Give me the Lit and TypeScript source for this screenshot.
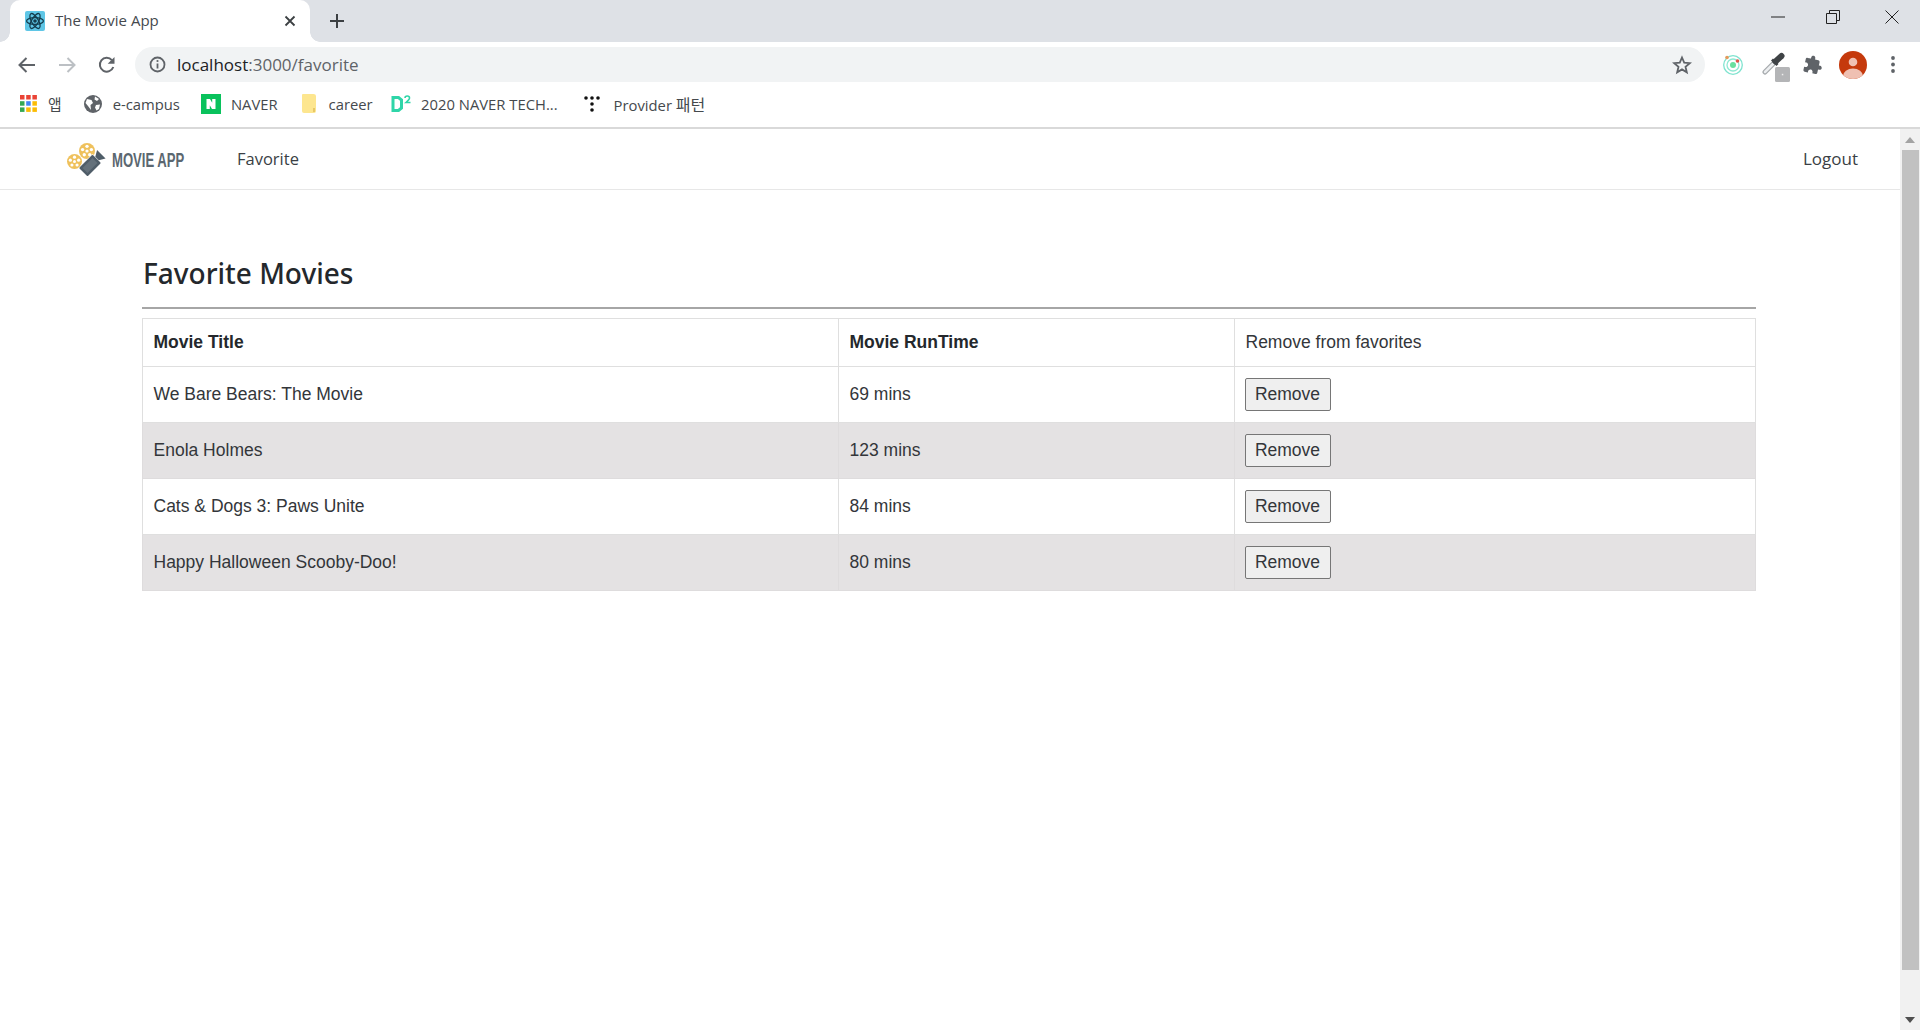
import { LitElement, html, css, svg } from "lit";
import { customElement } from "lit/decorators.js";

const movies = [
  ["We Bare Bears: The Movie", "69 mins"],
  ["Enola Holmes", "123 mins"],
  ["Cats & Dogs 3: Paws Unite", "84 mins"],
  ["Happy Halloween Scooby-Doo!", "80 mins"],
];

const atom = html`<svg width="20" height="20" viewBox="0 0 20 20">
  <rect width="20" height="20" rx="2" fill="#5fc6e6"/>
  <g fill="none" stroke="#143c4c" stroke-width="1.3">
    <ellipse cx="10" cy="10" rx="8.4" ry="3.4"/>
    <ellipse cx="10" cy="10" rx="8.4" ry="3.4" transform="rotate(60 10 10)"/>
    <ellipse cx="10" cy="10" rx="8.4" ry="3.4" transform="rotate(120 10 10)"/>
  </g>
  <circle cx="10" cy="10" r="1.8" fill="#143c4c"/>
</svg>`;

const reel = (cx: number, cy: number, r: number) => svg`
  <circle cx=${cx} cy=${cy} r=${r} fill="#efc15c"/>
  <circle cx=${cx} cy=${cy} r=${r * 0.2} fill="#fff"/>
  ${[0, 72, 144, 216, 288].map((a) => {
    const t = (a * Math.PI) / 180;
    return svg`<circle cx=${cx + Math.sin(t) * r * 0.58} cy=${cy - Math.cos(t) * r * 0.58} r=${r * 0.21} fill="#fff"/>`;
  })}`;

const logo = html`<svg class="logo-mark" width="42" height="38" viewBox="0 0 42 38">
  ${reel(7.5, 22.5, 7.5)}
  ${reel(20, 12, 8)}
  <g transform="rotate(-45 23 26.500)">
    <rect x="13" y="20" width="20" height="13" rx="1" fill="#fff"/>
    <rect x="13.500" y="20.500" width="19" height="12" rx="1" fill="#4f5d68"/>
    <rect x="16" y="23" width="14" height="7" fill="#64717b"/>
    <path d="M33 24 L39 20.500 V32.500 L33 29 Z" fill="#4f5d68"/>
  </g>
</svg>`;

@customElement("app-root")
export class AppRoot extends LitElement {
  static styles = css`
    :host {
      display: flex;
      flex-direction: column;
      width: 1920px;
      height: 1030px;
      overflow: hidden;
      background: #fff;
      font-family: "Open Sans", "Noto Sans CJK KR", sans-serif;
      color: #212529;
    }
    svg { display: block; flex: none; }

    .tabstrip {
      height: 42px;
      flex: none;
      display: flex;
      align-items: stretch;
      background: #dee1e6;
      padding-left: 10px;
    }
    .tab {
      position: relative;
      width: 300px;
      box-sizing: border-box;
      background: #fff;
      border-radius: 10px 10px 0 0;
      display: flex;
      align-items: center;
      gap: 10px;
      padding: 0 14px 0 15px;
      font-size: 15px;
      color: #45494d;
    }
    .tab::before, .tab::after {
      content: "";
      position: absolute;
      bottom: 0;
      width: 10px;
      height: 10px;
    }
    .tab::before { left: -10px; background: radial-gradient(circle at 0 0, #dee1e6 9.500px, #fff 10px); }
    .tab::after { right: -10px; background: radial-gradient(circle at 100% 0, #dee1e6 9.500px, #fff 10px); }
    .tab-title { flex: 1; line-height: 40px; height: 40px; margin-bottom: 2px; }
    .newtab { margin-left: 17px; width: 20px; display: flex; align-items: center; justify-content: center; }
    .winctl { margin-left: auto; display: flex; }
    .winbtn { width: 57px; display: flex; align-items: center; justify-content: center; margin-bottom: 8px; }
    .winbtn.restore { padding-right: 3px; box-sizing: border-box; }

    .toolbar {
      height: 46px;
      flex: none;
      box-sizing: border-box;
      padding: 5px 7px 6px;
      display: flex;
      align-items: center;
      background: #fff;
    }
    .tbtn { width: 40px; height: 35px; display: flex; align-items: center; justify-content: center; flex: none; }
    .tbtn.dropper { box-sizing: border-box; padding: 5px 0 0 6px; }
    .omni {
      flex: 1;
      height: 35px;
      margin: 0 8px;
      border-radius: 18px;
      background: #f1f3f4;
      display: flex;
      align-items: center;
      padding: 0 13px 0 14px;
      font-size: 17px;
      color: #5f6368;
    }
    .omni .host { color: #202124; }
    .url { margin-left: 11px; flex: 1; }

    .bookmarks {
      height: 41px;
      flex: none;
      box-sizing: border-box;
      display: flex;
      align-items: center;
      gap: 21px;
      padding: 0 0 8px 18px;
      font-size: 14.800px;
      color: #45494d;
      border-bottom: 2px solid #d9d9d9;
    }
    .bm { display: flex; align-items: center; gap: 10px; }
    .bm.wide { gap: 12px; }
    .bm.pull { margin-left: -2.500px; }
    .bm.push { margin-left: 3px; }
    .bm-icon { width: 20px; height: 20px; display: flex; align-items: center; justify-content: center; }
    .bm .hangul { font-size: 16px; }

    .viewport { flex: 1; display: flex; min-height: 0; }
    .page { flex: 1; min-width: 0; }
    .scrollbar {
      width: 20px;
      flex: none;
      background: #f1f1f1;
      display: flex;
      flex-direction: column;
      align-items: center;
    }
    .arrow { height: 21px; width: 100%; display: flex; align-items: center; justify-content: center; flex: none; }
    .thumb { width: 17px; height: 820px; background: #c1c1c1; flex: none; }
    .spacer { flex: 1; }

    .nav {
      height: 61px;
      box-sizing: border-box;
      border-bottom: 1px solid #e7e7e7;
      display: flex;
      align-items: center;
      padding: 0 42px 2px 67px;
      font-size: 16.500px;
      color: #3a3f45;
    }
    .brand { display: flex; align-items: center; width: 170px; }
    .brand-text {
      font-family: "Liberation Sans", sans-serif;
      font-weight: 700;
      font-size: 20px;
      line-height: 24px;
      padding-top: 3px;
      color: #5b6770;
      margin-left: 3px;
      white-space: nowrap;
      transform: scaleX(0.655);
      transform-origin: left center;
    }
    .logout { margin-left: auto; font-size: 17px; }

    .content { padding: 0 144px 0 142px; }
    h2 {
      margin: 0;
      padding: 64px 0 0 1px;
      height: 119px;
      box-sizing: border-box;
      font-family: "Noto Sans", "Open Sans", sans-serif;
      font-size: 28px;
      line-height: 38px;
      font-weight: 500;
      color: #24282c;
      border-bottom: 2px solid #a6a6a6;
    }
    table {
      width: 100%;
      margin-top: 9px;
      border-collapse: collapse;
      table-layout: fixed;
      font-family: "Liberation Sans", Arial, sans-serif;
      font-size: 17.500px;
      color: #33363a;
    }
    col.c1 { width: 696px; }
    col.c2 { width: 396px; }
    th, td {
      border: 1px solid #dfdfdf;
      padding: 0 10.500px;
      text-align: left;
      vertical-align: middle;
    }
    thead tr { height: 48px; }
    th { font-weight: 700; color: #24282c; }
    th.plain { font-weight: 400; color: #33363a; }
    tbody tr { height: 56px; }
    tbody tr:nth-child(even) { background: #e4e2e3; }
    tbody tr:nth-child(even) td { border-color: #dedcdd; }
    button {
      display: block;
      width: 86px;
      height: 33px;
      margin-left: -1px;
      padding: 0;
      font: inherit;
      color: #33363a;
      background: #efefef;
      border: 1px solid #767676;
      border-radius: 2px;
    }
  `;

  render() {
    return html`
      <div class="tabstrip">
        <div class="tab">
          ${atom}
          <span class="tab-title">The Movie App</span>
          <svg width="12" height="12" viewBox="0 0 12 12"><path d="M1.500 1.500 L10.500 10.500 M10.500 1.500 L1.500 10.500" stroke="#3c4043" stroke-width="1.800"/></svg>
        </div>
        <div class="newtab">
          <svg width="16" height="16" viewBox="0 0 16 16"><path d="M8 1 V15 M1 8 H15" stroke="#3c4043" stroke-width="2"/></svg>
        </div>
        <div class="winctl">
          <div class="winbtn"><svg width="14" height="2" viewBox="0 0 14 2"><path d="M0 1 H14" stroke="#222" stroke-width="1"/></svg></div>
          <div class="winbtn restore"><svg width="14" height="14" viewBox="0 0 14 14"><path d="M3.500 3 V0.500 H13.500 V10.500 H11 M0.500 3.500 H10.500 V13.500 H0.500 Z" fill="none" stroke="#222"/></svg></div>
          <div class="winbtn"><svg width="14" height="14" viewBox="0 0 14 14"><path d="M0.500 0.500 L13.500 13.500 M13.500 0.500 L0.500 13.500" stroke="#222" stroke-width="1"/></svg></div>
        </div>
      </div>

      <div class="toolbar">
        <div class="tbtn"><svg width="18" height="16" viewBox="0 0 18 16"><path d="M17 8 H2 M8.500 1 L1.500 8 L8.500 15" fill="none" stroke="#5f6368" stroke-width="2"/></svg></div>
        <div class="tbtn"><svg width="18" height="16" viewBox="0 0 18 16"><path d="M1 8 H16 M9.500 1 L16.500 8 L9.500 15" fill="none" stroke="#bcc0c4" stroke-width="2"/></svg></div>
        <div class="tbtn"><svg width="18" height="18" viewBox="0 0 18 18"><path d="M15.300 11 A6.900 6.900 0 1 1 13.900 4.100" fill="none" stroke="#5f6368" stroke-width="2"/><path d="M16.500 1 V7.800 H9.700 Z" fill="#5f6368"/></svg></div>
        <div class="omni">
          <svg width="17" height="17" viewBox="0 0 17 17"><circle cx="8.500" cy="8.500" r="7" fill="none" stroke="#5f6368" stroke-width="1.800"/><path d="M8.500 7.500 V12.500" stroke="#5f6368" stroke-width="1.800"/><circle cx="8.500" cy="5" r="1.100" fill="#5f6368"/></svg>
          <span class="url"><span class="host">localhost</span>:3000/favorite</span>
          <svg width="20" height="20" viewBox="0 0 20 20"><path d="M10 2.500 L12.200 7.600 L17.800 8.100 L13.500 11.800 L14.800 17.300 L10 14.400 L5.200 17.300 L6.500 11.800 L2.200 8.100 L7.800 7.600 Z" fill="none" stroke="#5f6368" stroke-width="1.800"/></svg>
        </div>
        <div class="tbtn"><svg width="22" height="22" viewBox="0 0 22 22">
          <circle cx="11" cy="11" r="9.300" fill="none" stroke="#7fe3cf" stroke-width="1.300"/>
          <circle cx="11" cy="11" r="6" fill="none" stroke="#8fe8d3" stroke-width="1.300"/>
          <circle cx="11" cy="11" r="3" fill="#69df9f"/>
          <circle cx="5" cy="3.500" r="1.800" fill="#e59a5c"/>
          <circle cx="15.500" cy="7" r="1.800" fill="#e2534a"/>
        </svg></div>
        <div class="tbtn dropper"><svg width="28" height="30" viewBox="0 0 28 30">
          <path d="M3 20 L11 12" stroke="#a6aaad" stroke-width="5" stroke-linecap="round"/>
          <path d="M3 20 L11 12" stroke="#eceef0" stroke-width="2.500" stroke-linecap="round"/>
          <path d="M10 7.500 L15.500 13" stroke="#3f4346" stroke-width="2.800"/>
          <path d="M13.500 9.500 L19.500 4" stroke="#3f4346" stroke-width="6" stroke-linecap="round"/>
          <rect x="13" y="15" width="15" height="15" rx="1.500" fill="#b4b5b7"/>
          <rect x="19.800" y="21.800" width="1.500" height="1.500" fill="#eee"/>
        </svg></div>
        <div class="tbtn"><svg width="20" height="20" viewBox="0 0 24 24"><path d="M20.500 11H19V7c0-1.100-.9-2-2-2h-4V3.500C13 2.100 11.900 1 10.500 1S8 2.100 8 3.500V5H4c-1.100 0-2 .9-2 2v3.800h1.500c1.500 0 2.700 1.200 2.700 2.700S5 16.200 3.500 16.200H2V20c0 1.100.9 2 2 2h3.800v-1.500c0-1.500 1.200-2.700 2.700-2.700s2.700 1.200 2.700 2.700V22H17c1.100 0 2-.9 2-2v-4h1.500c1.400 0 2.500-1.100 2.500-2.500S21.900 11 20.500 11z" fill="#5f6368" transform="rotate(12 12 12)"/></svg></div>
        <div class="tbtn"><svg width="28" height="28" viewBox="0 0 28 28">
          <defs><clipPath id="av"><circle cx="14" cy="14" r="14"/></clipPath></defs>
          <circle cx="14" cy="14" r="14" fill="#c5390c"/>
          <g clip-path="url(#av)"><circle cx="14" cy="11" r="4.300" fill="#efc0b2"/><ellipse cx="14" cy="25" rx="10" ry="7.500" fill="#efc0b2"/></g>
        </svg></div>
        <div class="tbtn"><svg width="6" height="20" viewBox="0 0 6 20"><circle cx="3" cy="3" r="1.900" fill="#5f6368"/><circle cx="3" cy="9.500" r="1.900" fill="#5f6368"/><circle cx="3" cy="16" r="1.900" fill="#5f6368"/></svg></div>
      </div>

      <div class="bookmarks">
        <div class="bm">
          <span class="bm-icon"><svg width="17" height="17" viewBox="0 0 17 17">
            <rect x="0" y="0" width="4.500" height="4.500" fill="#ea4335"/><rect x="6.200" y="0" width="4.500" height="4.500" fill="#ea4335"/><rect x="12.400" y="0" width="4.500" height="4.500" fill="#ea4335"/>
            <rect x="0" y="6.200" width="4.500" height="4.500" fill="#34a853"/><rect x="6.200" y="6.200" width="4.500" height="4.500" fill="#4285f4"/><rect x="12.400" y="6.200" width="4.500" height="4.500" fill="#fbbc05"/>
            <rect x="0" y="12.400" width="4.500" height="4.500" fill="#34a853"/><rect x="6.200" y="12.400" width="4.500" height="4.500" fill="#fbbc05"/><rect x="12.400" y="12.400" width="4.500" height="4.500" fill="#fbbc05"/>
          </svg></span>
          <span>앱</span>
        </div>
        <div class="bm">
          <span class="bm-icon"><svg width="18" height="18" viewBox="0 0 18 18"><circle cx="9" cy="9" r="9" fill="#5f6368"/><path d="M3 4 L7.500 5 L9 8 L6.500 10 L7 15 L4 11 L1.500 8 Z M11 1.500 L15 4 L13 6 L10.500 4.500 Z M12 10 L16 9.500 L15 14 L12.500 15.500 L11 12.500 Z" fill="#fff"/></svg></span>
          <span>e-campus</span>
        </div>
        <div class="bm">
          <span class="bm-icon"><svg width="20" height="20" viewBox="0 0 20 20"><rect width="20" height="20" fill="#09c25c"/><path d="M5.500 5 H9 L11.200 8.800 V5 H14.500 V15 H11 L8.800 11.200 V15 H5.500 Z" fill="#fff"/></svg></span>
          <span>NAVER</span>
        </div>
        <div class="bm">
          <span class="bm-icon"><svg width="16" height="19" viewBox="0 0 16 19"><path d="M1.500 0 H12.500 Q15 0 15 2 V17 Q15 19 13 19 H3 Q1 19 1 17 V1 Z" fill="#fde68f"/><rect x="12" y="14" width="2" height="4" fill="#e7c766"/></svg></span>
          <span>career</span>
        </div>
        <div class="bm pull">
          <span class="bm-icon"><svg width="20" height="18" viewBox="0 0 20 18"><path d="M2 2.500 H7.500 L10.500 5 V13 L7.500 15.500 H2 Z" fill="none" stroke="#2fd5a8" stroke-width="3"/><path d="M14 3 Q14 1 16.300 1 Q18.500 1 18.500 3 Q18.500 4.500 15 7.500 H19.500" fill="none" stroke="#2fd5a8" stroke-width="1.600"/></svg></span>
          <span>2020 NAVER TECH...</span>
        </div>
        <div class="bm wide push">
          <span class="bm-icon"><svg width="16" height="16" viewBox="0 0 16 16" fill="#111"><circle cx="2" cy="2" r="1.800"/><circle cx="8" cy="2" r="1.800"/><circle cx="14" cy="2" r="1.800"/><circle cx="8" cy="8" r="1.800"/><circle cx="8" cy="14" r="1.800"/></svg></span>
          <span>Provider <span class="hangul">패턴</span></span>
        </div>
      </div>

      <div class="viewport">
        <div class="page">
          <div class="nav">
            <div class="brand">${logo}<span class="brand-text">MOVIE APP</span></div>
            <span>Favorite</span>
            <span class="logout">Logout</span>
          </div>
          <div class="content">
            <h2>Favorite Movies</h2>
            <table>
              <colgroup><col class="c1"/><col class="c2"/><col/></colgroup>
              <thead><tr><th>Movie Title</th><th>Movie RunTime</th><th class="plain">Remove from favorites</th></tr></thead>
              <tbody>
                ${movies.map(([t, r]) => html`<tr><td>${t}</td><td>${r}</td><td><button>Remove</button></td></tr>`)}
              </tbody>
            </table>
          </div>
        </div>
        <div class="scrollbar">
          <div class="arrow"><svg width="10" height="6" viewBox="0 0 10 6"><path d="M0 6 L5 0 L10 6 Z" fill="#a3a3a3"/></svg></div>
          <div class="thumb"></div>
          <div class="spacer"></div>
          <div class="arrow"><svg width="10" height="6" viewBox="0 0 10 6"><path d="M0 0 L10 0 L5 6 Z" fill="#505050"/></svg></div>
        </div>
      </div>
    `;
  }
}
